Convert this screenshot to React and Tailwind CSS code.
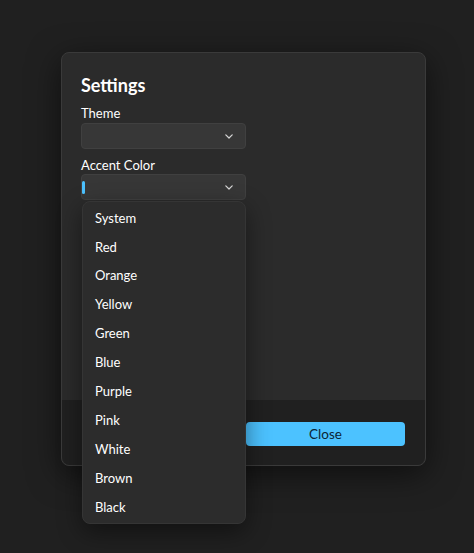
import React from "react";

const colors = [
  "System",
  "Red",
  "Orange",
  "Yellow",
  "Green",
  "Blue",
  "Purple",
  "Pink",
  "White",
  "Brown",
  "Black",
];

const Chevron = () => (
  <svg width="8" height="5" viewBox="0 0 8 5" fill="none">
    <path d="M0.8 0.8 L4 4 L7.2 0.8" stroke="#d6d6d6" strokeWidth="1.2" strokeLinecap="round" strokeLinejoin="round" />
  </svg>
);

const App = () => {
  return (
    <div
      className="w-full h-[553px] bg-[#202020] pt-[52px] pl-[61px] overflow-hidden"
      style={{ fontFamily: 'Lato, "Noto Sans", sans-serif' }}
    >
      <div className="w-[365px] h-[414px] flex flex-col rounded-lg border border-[#3a3a3a] bg-[#2b2b2b] shadow-[0_8px_32px_rgba(0,0,0,0.55)]">
        <div className="flex-1 pl-[19px] pr-[20px] pt-5">
          <h1 className="text-[18px] leading-[24px] font-bold text-white">Settings</h1>

          <div className="mt-[7px] text-[13px] leading-[18px] text-white">Theme</div>
          <div className="mt-px w-[165px] h-[26px] rounded-[4px] bg-[#373737] border border-[#404040] flex items-center justify-end pr-[12px]">
            <Chevron />
          </div>

          <div className="mt-[7px] text-[13px] leading-[18px] text-white">Accent Color</div>
          <div className="relative w-[165px] h-[26px] rounded-[4px] bg-[#373737] border border-[#404040] flex items-center justify-between pr-[12px]">
            <span className="w-[3px] h-[13px] rounded-full bg-[#4cc2ff]" />
            <Chevron />

            <div className="absolute left-0 top-[26px] w-[164px] z-10 rounded-lg bg-[#2c2c2c] border border-[#353535] pt-[2px] pb-[1px] shadow-[0_8px_24px_rgba(0,0,0,0.45)]">
              {colors.map((c) => (
                <div key={c} className="h-[28.9px] flex items-center pl-3 text-[13px] text-white">
                  {c}
                </div>
              ))}
            </div>
          </div>
        </div>

        <div className="h-[65px] bg-[#202020] rounded-b-lg px-5 pt-[22px] flex items-start">
          <div className="flex-1" />
          <button className="w-[159px] h-[24px] rounded-[4px] bg-[#4cc2ff] text-[13.5px] text-[#0b2535]">
            Close
          </button>
        </div>
      </div>
    </div>
  );
};

export default App;
